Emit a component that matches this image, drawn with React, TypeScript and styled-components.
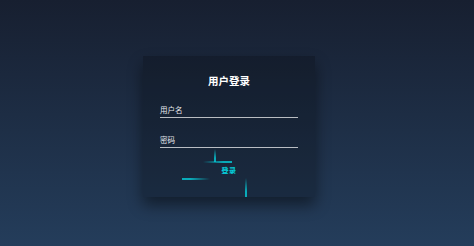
import React from "react";
import styled, { createGlobalStyle } from "styled-components";

const CYAN = "#03e9f4";

const GlobalStyle = createGlobalStyle`
  html, body {
    margin: 0;
    padding: 0;
  }
  body {
    font-family: "Noto Sans CJK SC", "Noto Sans", sans-serif;
  }
`;

const Page = styled.div`
  width: 474px;
  height: 246px;
  box-sizing: border-box;
  padding: 56px 0 0 143px;
  background: linear-gradient(#171f30, #243d5b);
  overflow: hidden;
`;

const LoginBox = styled.form`
  width: 172px;
  box-sizing: border-box;
  padding: 18px 17px 19px;
  background: rgba(0, 0, 0, 0.22);
  box-shadow: 0 8px 14px rgba(0, 0, 0, 0.45);
  display: flex;
  flex-direction: column;
`;

const Title = styled.h2`
  margin: 0 0 16px;
  padding: 0;
  font-size: 10.5px;
  line-height: 14px;
  font-weight: 700;
  color: #fff;
  text-align: center;
`;

type FieldProps = { $gap?: number };

const Field = styled.div<FieldProps>`
  position: relative;
  margin-bottom: ${({ $gap }) => $gap ?? 0}px;
`;

const Input = styled.input`
  display: block;
  width: 100%;
  height: 14px;
  box-sizing: border-box;
  padding: 0;
  margin: 0;
  border: none;
  border-bottom: 1px solid rgba(255, 255, 255, 0.7);
  background: transparent;
  outline: none;
  color: #fff;
  font-size: 7.5px;
`;

const Label = styled.label`
  position: absolute;
  left: 0;
  top: 0;
  font-size: 7.5px;
  line-height: 12px;
  color: #e6e9ee;
  pointer-events: none;
`;

const SubmitButton = styled.button`
  position: relative;
  display: flex;
  align-items: center;
  justify-content: center;
  height: 17px;
  margin: 13px 0 0;
  padding: 0;
  border: none;
  background: transparent;
  color: ${CYAN};
  font-family: inherit;
  font-size: 7px;
  letter-spacing: 0.5px;
  font-weight: 700;
  opacity: 0.85;
`;

type GlowProps = {
  $dir: "right" | "down" | "left" | "up";
  $x: number;
  $y: number;
  $len: number;
};

const Glow = styled.span<GlowProps>`
  position: absolute;
  left: ${({ $x }) => $x}px;
  top: ${({ $y }) => $y}px;
  width: ${({ $dir, $len }) => ($dir === "right" || $dir === "left" ? `${$len}px` : "1.5px")};
  height: ${({ $dir, $len }) => ($dir === "up" || $dir === "down" ? `${$len}px` : "1.5px")};
  background: ${({ $dir }) => {
    const angle = { right: 90, left: 270, down: 180, up: 0 }[$dir];
    return `linear-gradient(${angle}deg, transparent, ${CYAN} 70%)`;
  }};
  opacity: 0.8;
`;

export default function App() {
  return (
    <>
      <GlobalStyle />
      <Page>
        <LoginBox onSubmit={(e) => e.preventDefault()}>
          <Title>用户登录</Title>
          <Field $gap={16}>
            <Input id="username" type="text" />
            <Label htmlFor="username">用户名</Label>
          </Field>
          <Field>
            <Input id="password" type="password" />
            <Label htmlFor="password">密码</Label>
          </Field>
          <SubmitButton type="submit">
            <Glow $dir="right" $x={43} $y={0} $len={29} />
            <Glow $dir="down" $x={54} $y={-12} $len={13} />
            <Glow $dir="left" $x={22} $y={17} $len={28} />
            <Glow $dir="down" $x={85} $y={17} $len={19} />
            登录
          </SubmitButton>
        </LoginBox>
      </Page>
    </>
  );
}
